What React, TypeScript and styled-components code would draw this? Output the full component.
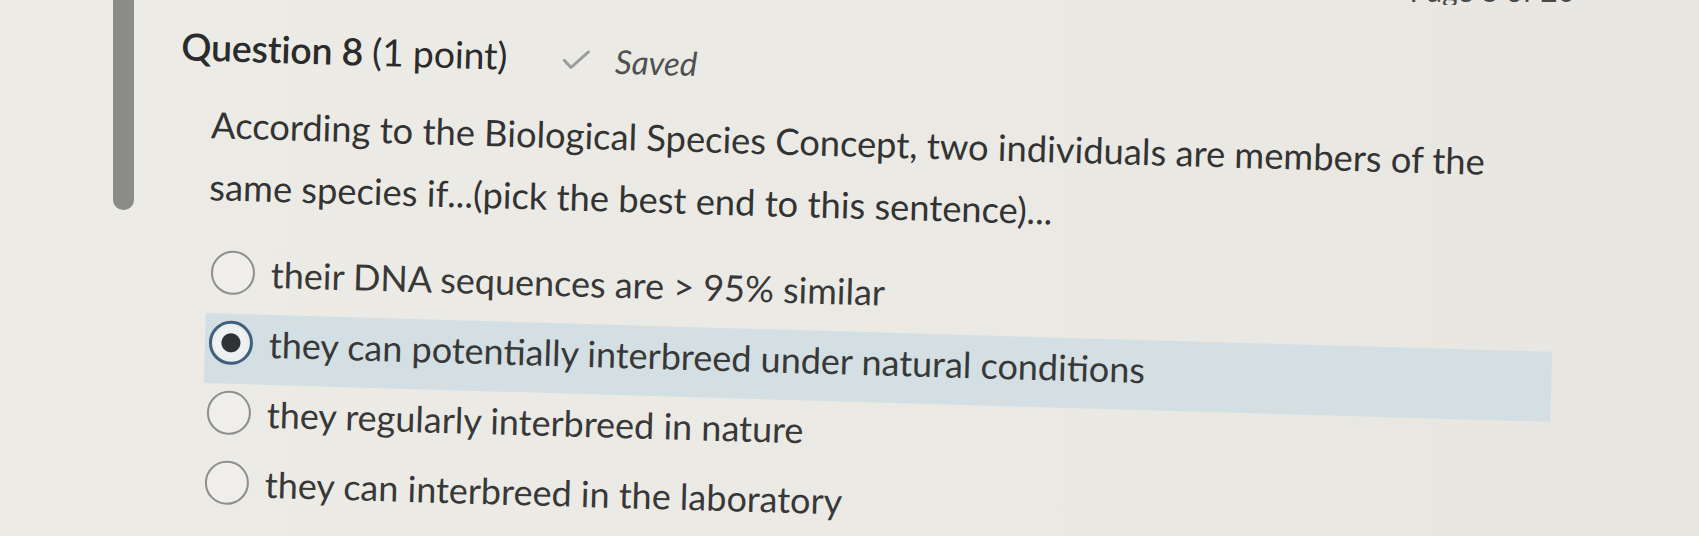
import React, { useState } from 'react'
import styled, { createGlobalStyle } from 'styled-components'

const GlobalStyle = createGlobalStyle`
  html, body {
    margin: 0;
    padding: 0;
    background: #eae9e4;
    font-family: Lato, "Open Sans", sans-serif;
    overflow: hidden;
  }
`

const options = [
  'their DNA sequences are > 95% similar',
  'they can potentially interbreed under natural conditions',
  'they regularly interbreed in nature',
  'they can interbreed in the laboratory',
]

const App: React.FC = () => {
  const [selected, setSelected] = useState(1)

  return (
    <Page>
      <GlobalStyle />
      <TopStrip>
        <Pager>Page 8 of 20</Pager>
      </TopStrip>
      <Main>
        <SideRail />
        <Content>
          <Header>
            <Title>
              Question 8 <Points>(1 point)</Points>
            </Title>
            <Status>
              <svg width="30" height="22" viewBox="0 0 30 22">
                <path
                  d="M3 12 L10 19 L27 3"
                  fill="none"
                  stroke="#9c9c9a"
                  strokeWidth="3"
                  strokeLinecap="round"
                  strokeLinejoin="round"
                />
              </svg>
              <Saved>Saved</Saved>
            </Status>
          </Header>

          <Body>
            <Prompt>
              According to the Biological Species Concept, two individuals are members of the
              same species if...(pick the best end to this sentence)...
            </Prompt>

            <Options>
              {options.map((text, i) => (
                <Option key={text} $active={i === selected} onClick={() => setSelected(i)}>
                  <Radio $checked={i === selected} />
                  <OptionText>{text}</OptionText>
                </Option>
              ))}
            </Options>
          </Body>
        </Content>
      </Main>
    </Page>
  )
}

export default App

const Page = styled.div`
  width: 1699px;
  height: 536px;
  background: linear-gradient(90deg, #ecebe6 0%, #eae9e4 60%, #e7e6e1 100%);
  overflow: hidden;
`

const TopStrip = styled.div`
  height: 5px;
  overflow: hidden;
  display: flex;
  justify-content: flex-end;
  align-items: flex-end;
  padding-right: 124px;
`

const Pager = styled.span`
  font-size: 30px;
  line-height: 1;
  color: #4a4a4a;
`

const Main = styled.div`
  display: flex;
  margin-top: -5px;
`

const SideRail = styled.div`
  flex: none;
  width: 21px;
  height: 210px;
  margin-left: 113px;
  background: #8b8b89;
  border-radius: 0 0 10px 10px;
`

const Content = styled.div`
  flex: 1;
  padding-left: 41px;
  transform: rotate(1.65deg);
  transform-origin: 0 270px;
`

const Header = styled.div`
  display: flex;
  align-items: center;
  gap: 54px;
  height: 60px;
  margin-top: 14px;
`

const Title = styled.h2`
  margin: 0;
  font-size: 37.5px;
  font-weight: 600;
  color: #2b2b2b;
  letter-spacing: -0.2px;
`

const Points = styled.span`
  font-weight: 400;
`

const Status = styled.div`
  display: flex;
  align-items: center;
  gap: 24px;
  padding-top: 6px;
`

const Saved = styled.span`
  font-size: 33px;
  font-style: italic;
  color: #505050;
`

const Body = styled.div`
  margin-left: 32px;
`

const Prompt = styled.p`
  margin: 17px 0 0;
  width: 1330px;
  font-size: 36.3px;
  line-height: 62px;
  color: #333333;
`

const Options = styled.div`
  display: flex;
  flex-direction: column;
  margin-top: 26px;
  width: 1347px;
`

const Option = styled.div<{ $active: boolean }>`
  display: flex;
  align-items: center;
  gap: 16px;
  height: 70px;
  padding: 0 0 12px 4px;
  box-sizing: border-box;
  background: ${(p) => (p.$active ? '#d3dfe2' : 'transparent')};
  cursor: pointer;
`

const Radio = styled.span<{ $checked: boolean }>`
  flex: none;
  width: 44px;
  height: 44px;
  box-sizing: border-box;
  border-radius: 50%;
  border: ${(p) => (p.$checked ? '3px solid #3f5f7c' : '2px solid #8e8e8c')};
  background: ${(p) =>
    p.$checked
      ? 'radial-gradient(circle, #2f3336 0 9px, #eef1f1 10px)'
      : '#efeeea'};
  box-shadow: ${(p) => (p.$checked ? 'inset 0 0 0 3px #e9eeee' : 'none')};
`

const OptionText = styled.span`
  font-size: 36px;
  color: #383838;
`
